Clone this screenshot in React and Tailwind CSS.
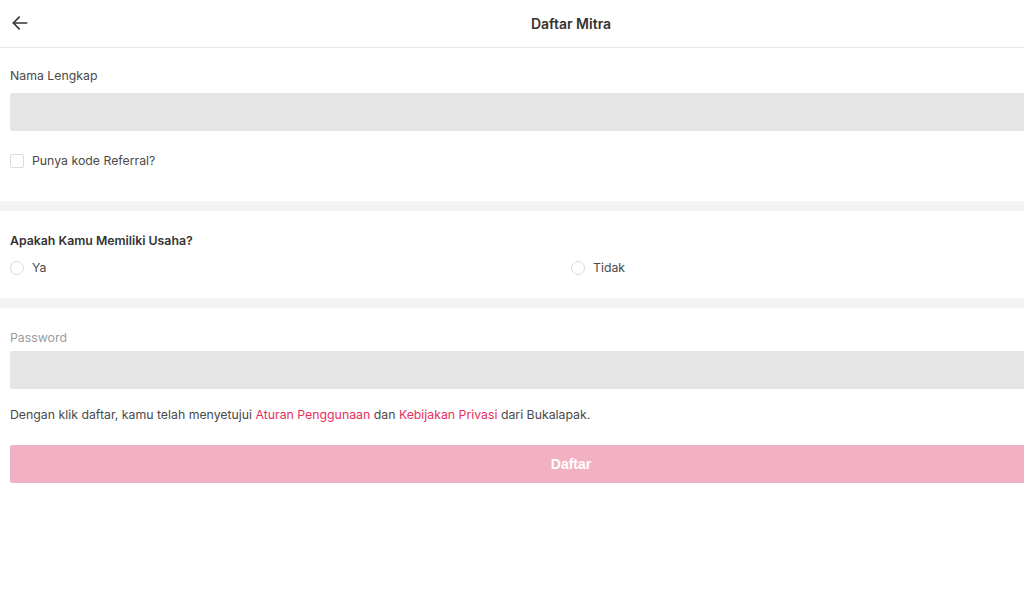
import { useState } from "react";

const font = { fontFamily: "Inter, 'Noto Sans', sans-serif" };

const Separator = () => <div className="h-[10px] bg-[#f3f3f4]" />;

const Radio = ({ label }) => (
  <label className="flex items-center gap-2 text-[12.3px] leading-[18px] text-[#4a4a4a]">
    <span className="w-[14px] h-[14px] rounded-full border border-[#dcdcdc] bg-white" />
    {label}
  </label>
);

export default function App() {
  const [referral, setReferral] = useState(false);

  return (
    <div className="w-full h-[596px] overflow-hidden bg-white" style={font}>
      <div className="w-[1142px]">
        {/* header */}
        <div className="h-12 flex items-center border-b border-[#e8e8e8] relative">
          <button className="absolute left-[10px] top-[13px] text-[#333]">
            <svg width="20" height="20" viewBox="0 0 24 24" fill="none" stroke="currentColor" strokeWidth="2" strokeLinecap="round" strokeLinejoin="round">
              <path d="M20 12H4" />
              <path d="M11 5l-7 7 7 7" />
            </svg>
          </button>
          <h1 className="w-full text-center text-[14px] font-semibold text-[#333]">Daftar Mitra</h1>
        </div>

        {/* nama */}
        <div className="px-[10px] pt-[19px] pb-[31px]">
          <p className="text-[12.3px] leading-[18px] text-[#4a4a4a]">Nama Lengkap</p>
          <div className="mt-[8px] h-[38px] bg-[#e5e5e5] rounded-[2px]" />
          <label className="mt-[21px] flex items-center gap-2 text-[12.3px] leading-[18px] text-[#4a4a4a]">
            <span
              onClick={() => setReferral(!referral)}
              className="w-[14px] h-[14px] rounded-[2px] border border-[#dcdcdc] bg-white"
            />
            Punya kode Referral?
          </label>
        </div>

        <Separator />

        {/* usaha */}
        <div className="px-[10px] pt-[21px] pb-[21px]">
          <p className="text-[12.3px] leading-[18px] font-semibold text-[#333]">Apakah Kamu Memiliki Usaha?</p>
          <div className="mt-[9px] grid grid-cols-2">
            <Radio label="Ya" />
            <Radio label="Tidak" />
          </div>
        </div>

        <Separator />

        {/* password */}
        <div className="px-[10px] pt-[21px]">
          <p className="text-[12.3px] leading-[18px] text-[#9b9b9b]">Password</p>
          <div className="mt-[4px] h-[38px] bg-[#e5e5e5] rounded-[2px]" />
          <p className="mt-[17px] text-[12.3px] leading-[18px] text-[#4a4a4a]">
            Dengan klik daftar, kamu telah menyetujui{" "}
            <span className="text-[#e5305f]">Aturan Penggunaan</span> dan{" "}
            <span className="text-[#e5305f]">Kebijakan Privasi</span> dari Bukalapak.
          </p>
          <button className="mt-[21px] w-full h-[38px] bg-[#f2b1c3] text-white text-[14px] font-bold rounded-[2px]" style={{ fontFamily: "'Liberation Sans', Arial, sans-serif" }}>
            Daftar
          </button>
        </div>
      </div>
    </div>
  );
}
